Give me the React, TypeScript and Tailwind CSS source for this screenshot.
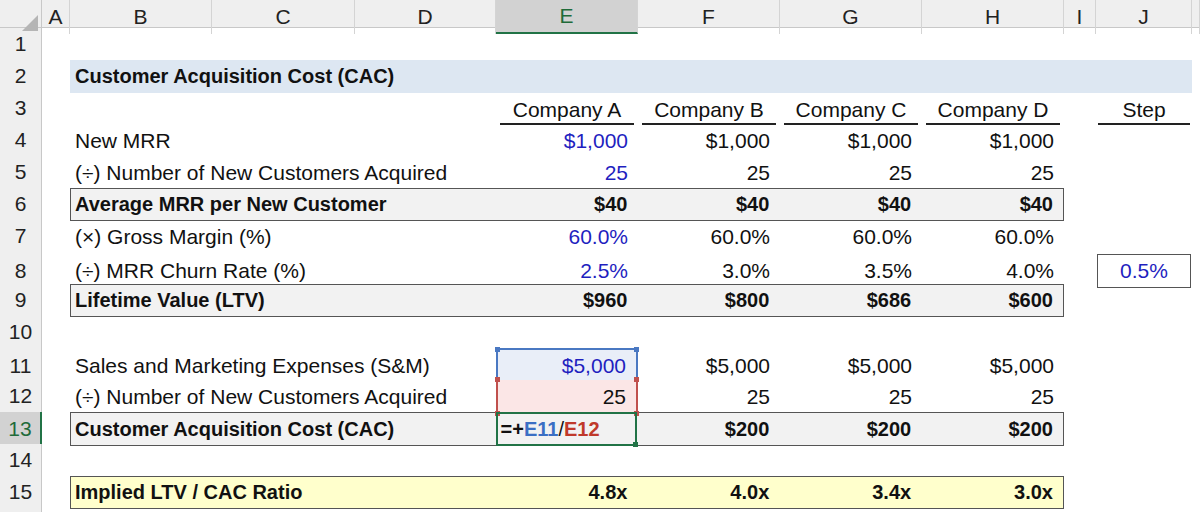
import React from "react";

const F = { fontFamily: '"Liberation Sans", Arial, sans-serif' };
const cols = "grid grid-cols-[42px_28px_142px_143px_141px_142px_142px_142px_142px_32px_96px_1fr]";

function Hdr() {
  const letters = ["A", "B", "C", "D", "E", "F", "G", "H", "I", "J", ""];
  return (
    <div className={`${cols} h-[28px] bg-[#efefef] border-b border-[#c8c8c8]`}>
      <div className="relative border-r border-[#c8c8c8]">
        <div className="absolute right-[3px] bottom-[3px] w-0 h-0 border-l-[16px] border-l-transparent border-b-[16px] border-b-[#b5b5b5]" />
      </div>
      {letters.map((l, i) => (
        <div
          key={i}
          className={`flex items-center justify-center text-[21px] border-r border-[#d4d4d4] ${
            l === "E" ? "bg-[#d2d2d2] text-[#1f6b3a] border-b-2 border-b-[#217346]" : "text-[#222]"
          }`}
        >
          {l}
        </div>
      ))}
    </div>
  );
}

function RowNum({ n }: { n: number }) {
  const sel = n === 13;
  return (
    <div
      className={`flex items-center justify-center text-[21px] border-b border-[#d4d4d4] ${
        sel ? "bg-[#d2d2d2] text-[#1f6b3a] border-r-2 border-r-[#217346]" : "bg-[#efefef] text-[#222] border-r border-r-[#c8c8c8]"
      }`}
    >
      {n > 15 ? "" : n}
    </div>
  );
}

function Row({ n, children }: { n: number; children?: React.ReactNode }) {
  return (
    <div className={`${cols} h-[32px]`}>
      <RowNum n={n} />
      <div />
      {children}
    </div>
  );
}

const blue = "text-[#1f1fbf]";

function Plain({ n, label, vals, firstBlue }: { n: number; label: string; vals: string[]; firstBlue?: boolean }) {
  return (
    <Row n={n}>
      <div className="col-span-3 flex items-center pl-[5px] text-[21px] text-[#111] whitespace-nowrap">{label}</div>
      {vals.map((v, i) => (
        <div key={i} className={`flex items-center justify-end pr-[10px] text-[21px] ${i === 0 && firstBlue ? blue : "text-[#111]"}`}>
          {v}
        </div>
      ))}
    </Row>
  );
}

function Boxed({ n, label, vals, bg, first }: { n: number; label: string; vals: string[]; bg: string; first?: React.ReactNode }) {
  return (
    <Row n={n}>
      <div className={`col-span-7 flex border border-[#555] ${bg} text-[20px] font-bold text-[#111]`}>
        <div className="w-[425px] flex items-center pl-[4px] whitespace-nowrap">{label}</div>
        {vals.map((v, i) =>
          i === 0 && first ? (
            <React.Fragment key={i}>{first}</React.Fragment>
          ) : (
            <div key={i} className="w-[142px] flex items-center justify-end pr-[10px]">{v}</div>
          )
        )}
      </div>
    </Row>
  );
}

function Dot({ c, pos }: { c: string; pos: string }) {
  return <div className={`absolute w-[5px] h-[5px] ${c} ${pos}`} />;
}

export default function App() {
  return (
    <div className="w-[1200px] h-[512px] bg-white overflow-hidden" style={F}>
      <Hdr />
      <Row n={1} />
      <Row n={2}>
        <div className="col-span-9 flex items-center pl-[5px] bg-[#dde7f2] text-[20px] font-bold text-[#111]">
          Customer Acquisition Cost (CAC)
        </div>
      </Row>
      <Row n={3}>
        <div className="col-span-3" />
        {["Company A", "Company B", "Company C", "Company D"].map((c) => (
          <div key={c} className="flex items-end justify-center px-[4px]">
            <div className="w-full text-center text-[21px] text-[#111] border-b-2 border-[#222] leading-[27px]">{c}</div>
          </div>
        ))}
        <div />
        <div className="flex items-end justify-center px-[2px]">
          <div className="w-full text-center text-[21px] text-[#111] border-b-2 border-[#222] leading-[27px]">Step</div>
        </div>
      </Row>
      <Plain n={4} label="New MRR" vals={["$1,000", "$1,000", "$1,000", "$1,000"]} firstBlue />
      <Plain n={5} label="(÷) Number of New Customers Acquired" vals={["25", "25", "25", "25"]} firstBlue />
      <Boxed n={6} label="Average MRR per New Customer" vals={["$40", "$40", "$40", "$40"]} bg="bg-[#f2f2f2]" />
      <Plain n={7} label="(×) Gross Margin (%)" vals={["60.0%", "60.0%", "60.0%", "60.0%"]} firstBlue />
      <Row n={8}>
        <div className="col-span-3 flex items-center pl-[5px] text-[21px] text-[#111]">(÷) MRR Churn Rate (%)</div>
        {["2.5%", "3.0%", "3.5%", "4.0%"].map((v, i) => (
          <div key={i} className={`flex items-center justify-end pr-[10px] text-[21px] ${i === 0 ? blue : "text-[#111]"}`}>{v}</div>
        ))}
        <div />
        <div className={`my-[2px] mx-[1px] border border-[#555] flex items-center justify-center text-[21px] ${blue}`}>0.5%</div>
      </Row>
      <Boxed n={9} label="Lifetime Value (LTV)" vals={["$960", "$800", "$686", "$600"]} bg="bg-[#f2f2f2]" />
      <Row n={10} />
      <Row n={11}>
        <div className="col-span-3 flex items-center pl-[5px] text-[21px] text-[#111] whitespace-nowrap">Sales and Marketing Expenses (S&amp;M)</div>
        <div className={`relative flex items-center justify-end pr-[10px] text-[21px] ${blue} bg-[#e9eef8] border-2 border-[#4a78c2]`}>
          $5,000
          <Dot c="bg-[#4a78c2]" pos="-left-[3px] -top-[3px]" />
          <Dot c="bg-[#4a78c2]" pos="-right-[3px] -top-[3px]" />
        </div>
        {["$5,000", "$5,000", "$5,000"].map((v, i) => (
          <div key={i} className="flex items-center justify-end pr-[10px] text-[21px] text-[#111]">{v}</div>
        ))}
      </Row>
      <Row n={12}>
        <div className="col-span-3 flex items-center pl-[5px] text-[21px] text-[#111] whitespace-nowrap">(÷) Number of New Customers Acquired</div>
        <div className="relative flex items-center justify-end pr-[10px] text-[21px] text-[#111] bg-[#fbe6e6] border-x-2 border-[#c0504d]">
          25
          <Dot c="bg-[#c0504d]" pos="-left-[3px] -top-[3px]" />
          <Dot c="bg-[#c0504d]" pos="-right-[3px] -top-[3px]" />
          <Dot c="bg-[#c0504d]" pos="-left-[3px] -bottom-[3px]" />
          <Dot c="bg-[#c0504d]" pos="-right-[3px] -bottom-[3px]" />
        </div>
        {["25", "25", "25"].map((v, i) => (
          <div key={i} className="flex items-center justify-end pr-[10px] text-[21px] text-[#111]">{v}</div>
        ))}
      </Row>
      <Boxed
        n={13}
        label="Customer Acquisition Cost (CAC)"
        vals={["", "$200", "$200", "$200"]}
        bg="bg-[#f2f2f2]"
        first={
          <div className="relative w-[142px] -my-px border-2 border-[#217346] flex items-center pl-[3px]">
            <span className="text-[#111]">=+</span>
            <span className="text-[#3b6fc4]">E11</span>
            <span className="text-[#111] font-normal">/</span>
            <span className="text-[#c0392b]">E12</span>
            <Dot c="bg-[#217346]" pos="-right-[3px] -bottom-[3px]" />
          </div>
        }
      />
      <Row n={14} />
      <Boxed n={15} label="Implied LTV / CAC Ratio" vals={["4.8x", "4.0x", "3.4x", "3.0x"]} bg="bg-[#ffffcc]" />
      <Row n={16} />
    </div>
  );
}
